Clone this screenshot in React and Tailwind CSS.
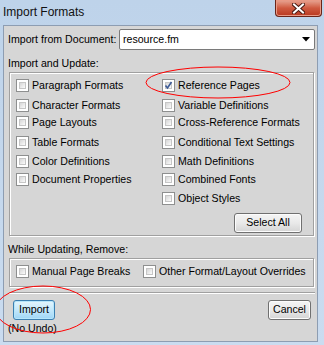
import React from "react";

function Checkbox({ checked }) {
  return (
    <span className="relative inline-block w-[13px] h-[13px] shrink-0 border border-[#8e8f8f] bg-white">
      <span className="absolute inset-[2px] bg-gradient-to-br from-[#d6d6d6] to-[#fbfbfb] border border-[#c6c6c6]" />
      {checked && (
        <svg className="absolute left-[1px] top-[1px]" width="9" height="9" viewBox="0 0 9 9">
          <path d="M1.5 4.5 L3.5 7 L7.5 1" fill="none" stroke="#3c5a96" strokeWidth="1.6" />
        </svg>
      )}
    </span>
  );
}

function Row({ label, checked }) {
  return (
    <div className="flex items-center gap-[3px] h-[13px] leading-none whitespace-nowrap">
      <Checkbox checked={checked} />
      <span>{label}</span>
    </div>
  );
}

function Button({ children, className, primary }) {
  return (
    <div
      className={
        "h-[20px] flex items-center justify-center rounded-[3px] border " +
        (primary
          ? "border-[#3c7fb1] bg-gradient-to-b from-[#e5f6fd] via-[#c4e8fb] to-[#9fd6f6] shadow-[inset_0_0_0_1px_#b6e6fb] "
          : "border-[#707070] bg-gradient-to-b from-[#f5f5f5] via-[#e9e9e9] to-[#d4d4d4] shadow-[inset_0_0_0_1px_#fcfcfc] ") +
        className
      }
    >
      {children}
    </div>
  );
}

const rows = [
  ["Paragraph Formats", "Reference Pages", "mt-[6px]"],
  ["Character Formats", "Variable Definitions", "mt-[7px]"],
  ["Page Layouts", "Cross-Reference Formats", "mt-[4px]"],
  ["Table Formats", "Conditional Text Settings", "mt-[7px]"],
  ["Color Definitions", "Math Definitions", "mt-[6px]"],
  ["Document Properties", "Combined Fonts", "mt-[5px]"],
  [null, "Object Styles", "mt-[6px]"],
];

export default function App() {
  return (
    <div className="relative w-[324px] h-[345px] overflow-hidden bg-gradient-to-b from-[#bed3ea] to-[#cadcf0] flex flex-col text-[10.6px] text-black font-['Liberation_Sans',Arial,sans-serif]">
      {/* Title bar */}
      <div className="h-[25px] shrink-0 flex items-start justify-between pl-[3px]">
        <span className="text-[12px] mt-[3px] text-[#111]">Import Formats</span>
        <div className="w-[47px] h-[17px] mr-[2px] rounded-b-[4px] border border-t-0 border-[#6a2418] bg-gradient-to-b from-[#e7a695] via-[#cf5a40] to-[#b8371f] shadow-[inset_0_0_0_1px_#e99a86] flex items-center justify-center">
          <svg width="13" height="11" viewBox="0 0 13 11">
            <path d="M2 1.5 L11 9.5 M11 1.5 L2 9.5" stroke="#4a1a12" strokeWidth="4" strokeLinecap="square" />
            <path d="M2 1.5 L11 9.5 M11 1.5 L2 9.5" stroke="#ffffff" strokeWidth="2" strokeLinecap="square" />
          </svg>
        </div>
      </div>

      {/* Body */}
      <div className="ml-[3px] mr-[6px] mb-[3px] flex-1 bg-[#d6d6d6] border border-[#8d9db2] flex flex-col">
        {/* Import from document */}
        <div className="mt-[3px] flex items-center h-[21px]">
          <span className="ml-[4px] w-[111px] shrink-0 whitespace-nowrap">Import from Document:</span>
          <div className="flex-1 mr-[2px] h-[21px] bg-white border border-[#7a7a7a] rounded-[2px] flex items-center justify-between pl-[3px] pr-[4px]">
            <span>resource.fm</span>
            <svg width="8" height="5" viewBox="0 0 8 5">
              <path d="M0 0 L8 0 L4 4.5 Z" fill="#000" />
            </svg>
          </div>
        </div>

        <div className="mt-[7px] ml-[4px] h-[13px] leading-[13px]">Import and Update:</div>

        {/* Group box 1 */}
        <div className="mt-[2px] ml-[5px] mr-[3px] border border-[#a0a0a0] shadow-[inset_1px_1px_0_#fff,1px_1px_0_#fff] flex flex-col pb-[2px]">
          {rows.map(([l, r, mt], i) => (
            <div key={i} className={"grid grid-cols-[146px_1fr] pl-[6px] " + mt}>
              <div>{l && <Row label={l} />}</div>
              <div>
                <Row label={r} checked={i === 0} />
              </div>
            </div>
          ))}
          <div className="mt-[8px] flex justify-end mr-[11px]">
            <Button className="w-[68px]">Select All</Button>
          </div>
        </div>

        <div className="mt-[7px] ml-[4px] h-[13px] leading-[13px]">While Updating, Remove:</div>

        {/* Group box 2 */}
        <div className="mt-[2px] ml-[5px] mr-[3px] border border-[#a0a0a0] shadow-[inset_1px_1px_0_#fff,1px_1px_0_#fff] flex pt-[6px] pb-[8px] pl-[6px]">
          <div className="w-[127px]">
            <Row label="Manual Page Breaks" />
          </div>
          <Row label="Other Format/Layout Overrides" />
        </div>

        {/* Separator */}
        <div className="mt-[5px] ml-[5px] mr-[2px] h-[2px] border-t border-[#a0a0a0] border-b-0 bg-white" />

        {/* Buttons */}
        <div className="mt-[6px] flex justify-between">
          <Button primary className="ml-[9px] w-[42px]">Import</Button>
          <Button className="mr-[6px] w-[43px]">Cancel</Button>
        </div>
        <div className="mt-[2px] ml-[4px] h-[13px] leading-[13px]">(No Undo)</div>
      </div>

      {/* Red annotation ellipses */}
      <svg className="absolute left-0 top-0 pointer-events-none" width="324" height="345" viewBox="0 0 324 345">
        <ellipse cx="218" cy="82.5" rx="72" ry="15.5" fill="none" stroke="#ff0000" strokeWidth="1" />
        <ellipse cx="43" cy="309.5" rx="47.5" ry="23.5" fill="none" stroke="#ff0000" strokeWidth="1" />
      </svg>
    </div>
  );
}
